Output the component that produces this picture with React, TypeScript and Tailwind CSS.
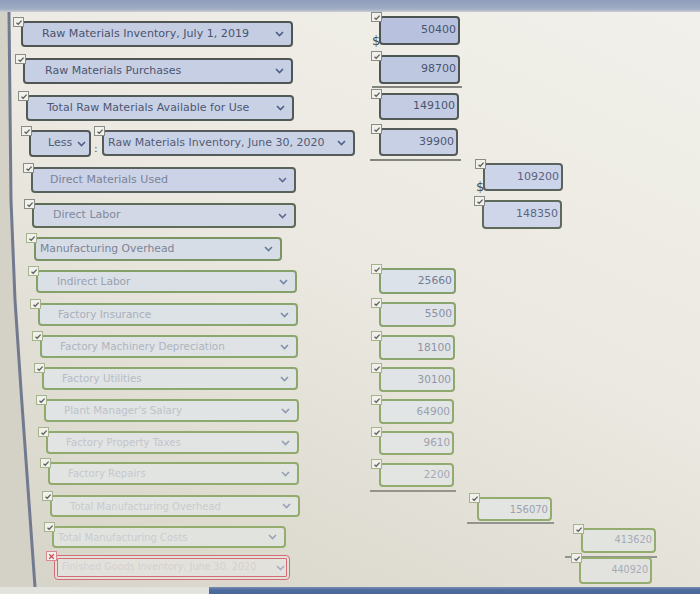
import React from "react";

type Value = {
  text: string;
  col: 1 | 2 | 3;
  wrap: string;
  box: string;
  tick: string;
  dollar?: boolean;
  rule?: string;
};

type Row = {
  label: string;
  row: string;
  sel: string;
  pad: string;
  box: string;
  chev: string;
  tick: string;
  value?: Value;
  less?: boolean;
  bad?: boolean;
};

const DARK_TICK = "border-[#8a8c88]";
const GREEN_TICK = "border-[#a3b48e]";

const ROWS: Row[] = [
  {
    label: "Raw Materials Inventory, July 1, 2019",
    row: "h-[37px]",
    sel: "ml-[21px] w-[272px] h-[26px]",
    pad: "pl-[19px] text-[11.1px]",
    box: "bg-[#c5cde3] border-[#4e5553] text-[#4a536e]",
    chev: "mr-[7px] text-[#4d5c82]",
    tick: DARK_TICK,
    value: {
      text: "50400",
      col: 1,
      wrap: "ml-[14px] mt-[-5px]",
      box: "w-[81px] h-[29px] bg-[#b8c2de] border-[#4c5452] text-[#4a536e] text-[11px]",
      tick: DARK_TICK,
      dollar: true,
    },
  },
  {
    label: "Raw Materials Purchases",
    row: "h-[37px]",
    sel: "ml-[23px] w-[270px] h-[26px]",
    pad: "pl-[20px] text-[11px]",
    box: "bg-[#c7cfe4] border-[#4f5654] text-[#4c5570]",
    chev: "mr-[7px] text-[#4d5c82]",
    tick: DARK_TICK,
    value: {
      text: "98700",
      col: 1,
      wrap: "ml-[14px] mt-[-3px]",
      box: "w-[81px] h-[29px] bg-[#bfc8e1] border-[#4e5654] text-[#4a536e] text-[11px]",
      tick: DARK_TICK,
      rule: "ml-[-7px] mt-[2px] w-[90px] bg-[#85857f]",
    },
  },
  {
    label: "Total Raw Materials Available for Use",
    row: "h-[35px]",
    sel: "ml-[26px] w-[268px] h-[26px]",
    pad: "pl-[19px] text-[11px]",
    box: "bg-[#c9d1e5] border-[#525957] text-[#4e5772]",
    chev: "mr-[7px] text-[#4f5e84]",
    tick: DARK_TICK,
    value: {
      text: "149100",
      col: 1,
      wrap: "ml-[14px] mt-[-2px]",
      box: "w-[80px] h-[27px] bg-[#c4cce3] border-[#525a57] text-[#4c5570] text-[11px]",
      tick: DARK_TICK,
    },
  },
  {
    label: "Raw Materials Inventory, June 30, 2020",
    row: "h-[37px]",
    sel: "w-[253px] h-[26px]",
    pad: "pl-[4px] text-[11px]",
    box: "bg-[#cad2e6] border-[#545b58] text-[#525b75]",
    chev: "mr-[7px] text-[#52618a]",
    tick: DARK_TICK,
    less: true,
    value: {
      text: "39900",
      col: 1,
      wrap: "ml-[14px] mt-[-2px]",
      box: "w-[79px] h-[28px] bg-[#c8d0e5] border-[#545b58] text-[#4e5772] text-[11px]",
      tick: DARK_TICK,
      rule: "ml-[-9px] mt-[3px] w-[91px] bg-[#85857f]",
    },
  },
  {
    label: "Direct Materials Used",
    row: "h-[36px]",
    sel: "ml-[31px] w-[265px] h-[26px]",
    pad: "pl-[17px] text-[11px]",
    box: "bg-[#ccd3e6] border-[#5a615d] text-[#7a8296]",
    chev: "mr-[7px] text-[#5b6a90]",
    tick: DARK_TICK,
    value: {
      text: "109200",
      col: 2,
      wrap: "ml-[13px] mt-[-4px]",
      box: "w-[80px] h-[28px] bg-[#ccd4e9] border-[#5a625c] text-[#5a6380] text-[11px]",
      tick: DARK_TICK,
      dollar: true,
    },
  },
  {
    label: "Direct Labor",
    row: "h-[34px]",
    sel: "ml-[32px] w-[264px] h-[25px]",
    pad: "pl-[19px] text-[11px]",
    box: "bg-[#d2d8e5] border-[#5e6b57] text-[#8189a0]",
    chev: "mr-[7px] text-[#5e6d92]",
    tick: DARK_TICK,
    value: {
      text: "148350",
      col: 2,
      wrap: "ml-[12px] mt-[-3px]",
      box: "w-[80px] h-[29px] bg-[#cfd6e9] border-[#5f6a5b] text-[#5d6682] text-[11px]",
      tick: DARK_TICK,
    },
  },
  {
    label: "Manufacturing Overhead",
    row: "h-[33px]",
    sel: "ml-[34px] w-[248px] h-[24px]",
    pad: "pl-[4px] text-[10.8px]",
    box: "bg-[#d7dde6] border-[#7b9466] text-[#7b8396]",
    chev: "mr-[7px] text-[#6a789a]",
    tick: GREEN_TICK,
  },
  {
    label: "Indirect Labor",
    row: "h-[33px]",
    sel: "ml-[36px] w-[261px] h-[23px]",
    pad: "pl-[19px] text-[10.6px]",
    box: "bg-[#dbe0e7] border-[#86a06a] text-[#98a0b0]",
    chev: "mr-[7px] text-[#7583a4]",
    tick: GREEN_TICK,
    value: {
      text: "25660",
      col: 1,
      wrap: "ml-[14px] mt-[-2px]",
      box: "w-[77px] h-[26px] bg-[#dce2ea] border-[#84a06c] text-[#737c93] text-[10.8px]",
      tick: GREEN_TICK,
    },
  },
  {
    label: "Factory Insurance",
    row: "h-[32px]",
    sel: "ml-[38px] w-[260px] h-[23px]",
    pad: "pl-[18px] text-[10.5px]",
    box: "bg-[#dde2e6] border-[#8aa56c] text-[#a9afbb]",
    chev: "mr-[7px] text-[#7f8ba8]",
    tick: GREEN_TICK,
    value: {
      text: "5500",
      col: 1,
      wrap: "ml-[14px] mt-[-1px]",
      box: "w-[77px] h-[25px] bg-[#dfe3e8] border-[#8aa56e] text-[#8a90a2] text-[10.7px]",
      tick: GREEN_TICK,
    },
  },
  {
    label: "Factory Machinery Depreciation",
    row: "h-[32px]",
    sel: "ml-[40px] w-[258px] h-[23px]",
    pad: "pl-[18px] text-[10.4px]",
    box: "bg-[#dfe3e6] border-[#8ca76c] text-[#aeb4bf]",
    chev: "mr-[7px] text-[#8591ab]",
    tick: GREEN_TICK,
    value: {
      text: "18100",
      col: 1,
      wrap: "ml-[14px]",
      box: "w-[76px] h-[25px] bg-[#e0e4e7] border-[#8ca76e] text-[#8e94a5] text-[10.6px]",
      tick: GREEN_TICK,
    },
  },
  {
    label: "Factory Utilities",
    row: "h-[32px]",
    sel: "ml-[42px] w-[256px] h-[23px]",
    pad: "pl-[18px] text-[10.3px]",
    box: "bg-[#e0e4e5] border-[#8ea86c] text-[#b7bbc4]",
    chev: "mr-[7px] text-[#8a95ae]",
    tick: GREEN_TICK,
    value: {
      text: "30100",
      col: 1,
      wrap: "ml-[14px]",
      box: "w-[76px] h-[25px] bg-[#e1e4e6] border-[#8ea86e] text-[#9197a7] text-[10.5px]",
      tick: GREEN_TICK,
    },
  },
  {
    label: "Plant Manager's Salary",
    row: "h-[32px]",
    sel: "ml-[44px] w-[255px] h-[23px]",
    pad: "pl-[18px] text-[10.3px]",
    box: "bg-[#e1e4e4] border-[#90a96c] text-[#bec2c9]",
    chev: "mr-[7px] text-[#8f99b1]",
    tick: GREEN_TICK,
    value: {
      text: "64900",
      col: 1,
      wrap: "ml-[14px]",
      box: "w-[75px] h-[25px] bg-[#e2e5e5] border-[#90a96e] text-[#9aa0ae] text-[10.5px]",
      tick: GREEN_TICK,
    },
  },
  {
    label: "Factory Property Taxes",
    row: "h-[31px]",
    sel: "ml-[46px] w-[253px] h-[23px]",
    pad: "pl-[18px] text-[10.2px]",
    box: "bg-[#e2e4e3] border-[#91aa6c] text-[#c2c5cb]",
    chev: "mr-[7px] text-[#939db3]",
    tick: GREEN_TICK,
    value: {
      text: "9610",
      col: 1,
      wrap: "ml-[14px]",
      box: "w-[75px] h-[24px] bg-[#e3e5e4] border-[#91aa6e] text-[#9da2b0] text-[10.4px]",
      tick: GREEN_TICK,
    },
  },
  {
    label: "Factory Repairs",
    row: "h-[33px]",
    sel: "ml-[48px] w-[251px] h-[23px]",
    pad: "pl-[18px] text-[10.1px]",
    box: "bg-[#e2e4e2] border-[#92ab6c] text-[#c6c8cd]",
    chev: "mr-[7px] text-[#969fb5]",
    tick: GREEN_TICK,
    value: {
      text: "2200",
      col: 1,
      wrap: "ml-[14px] mt-[1px]",
      box: "w-[75px] h-[24px] bg-[#e3e5e3] border-[#92ab6e] text-[#a4a9b5] text-[10.3px]",
      tick: GREEN_TICK,
      rule: "ml-[-9px] mt-[3px] w-[86px] bg-[#94948e]",
    },
  },
  {
    label: "Total Manufacturing Overhead",
    row: "h-[31px]",
    sel: "ml-[50px] w-[250px] h-[22px]",
    pad: "pl-[18px] text-[10px]",
    box: "bg-[#e2e4e1] border-[#93ac6c] text-[#c9cbcf]",
    chev: "mr-[7px] text-[#98a1b6]",
    tick: GREEN_TICK,
    value: {
      text: "156070",
      col: 2,
      wrap: "ml-[7px] mt-[2px]",
      box: "w-[75px] h-[24px] bg-[#e3e5e2] border-[#93ac6e] text-[#9ca1af] text-[10px]",
      tick: GREEN_TICK,
      rule: "ml-[-10px] mt-[1px] w-[87px] bg-[#94948e]",
    },
  },
  {
    label: "Total Manufacturing Costs",
    row: "h-[29px]",
    sel: "ml-[52px] w-[234px] h-[22px]",
    pad: "pl-[4px] text-[10px]",
    box: "bg-[#e1e3df] border-[#94ad6c] text-[#cacbcf]",
    chev: "mr-[7px] text-[#9aa3b7]",
    tick: GREEN_TICK,
    value: {
      text: "413620",
      col: 3,
      wrap: "ml-[11px] mt-[2px]",
      box: "w-[75px] h-[25px] bg-[#e2e4e0] border-[#94ad6e] text-[#a6abb6] text-[9.8px]",
      tick: GREEN_TICK,
      rule: "ml-[-16px] mt-[3px] w-[92px] bg-[#94948e]",
    },
  },
  {
    label: "Finished Goods Inventory, June 30, 2020",
    row: "h-[32px]",
    sel: "ml-[54px] w-[236px] h-[25px]",
    pad: "pl-[4px] text-[9.6px]",
    box: "bg-[#e3e1dc] border-[#d66a74] text-[#d3d0d0]",
    chev: "mr-[1px] text-[#a8aec0]",
    tick: "border-[#d98a90]",
    bad: true,
    value: {
      text: "440920",
      col: 3,
      wrap: "ml-[9px] mt-[2px]",
      box: "w-[73px] h-[27px] bg-[#e2e3df] border-[#95ad6e] text-[#a6abb6] text-[9.6px]",
      tick: GREEN_TICK,
    },
  },
];

const Tick = ({ tone, bad }: { tone: string; bad?: boolean }) => (
  <span
    className={`absolute -left-[8px] -top-[4px] z-10 flex h-[10px] w-[11px] items-center justify-center border bg-[#f1f0ea] ${tone}`}
  >
    {bad ? (
      <svg width="7" height="7" viewBox="0 0 7 7">
        <path d="M1.2 1.2L5.8 5.8M5.8 1.2L1.2 5.8" stroke="#d24b58" strokeWidth="1.3" />
      </svg>
    ) : (
      <svg width="8" height="7" viewBox="0 0 8 7">
        <path d="M1.5 3.8L3.2 5.3L6.6 1.6" fill="none" stroke="#5e615d" strokeWidth="1.3" />
      </svg>
    )}
  </span>
);

const Chevron = () => (
  <svg width="9" height="6" viewBox="0 0 9 6">
    <path d="M1 1L4.5 4.5L8 1" fill="none" stroke="currentColor" strokeWidth="1.6" />
  </svg>
);

const Select = ({
  cls,
  box,
  pad,
  chev,
  tick,
  label,
  bad,
}: {
  cls: string;
  box: string;
  pad: string;
  chev: string;
  tick: string;
  label: string;
  bad?: boolean;
}) => (
  <div className={`relative shrink-0 ${cls}`}>
    <Tick tone={tick} bad={bad} />
    <div
      className={`flex h-full w-full items-center justify-between rounded-[4px] ${bad ? "border-[4px] border-double" : "border-2"} ${box}`}
    >
      <span className={`whitespace-nowrap ${pad}`}>{label}</span>
      <span className={`shrink-0 ${chev}`}>
        <Chevron />
      </span>
    </div>
  </div>
);

const Amount = ({ v }: { v: Value }) => {
  const parts = v.box.split(" ");
  return (
    <div className={`flex flex-col items-start ${v.wrap}`}>
      <div className={`relative ${parts.slice(0, 2).join(" ")}`}>
        <Tick tone={v.tick} />
        {v.dollar && (
          <span className="absolute -left-[7px] bottom-[-2px] text-[13px] leading-none text-[#4c4c4a]">$</span>
        )}
        <div
          className={`flex h-full w-full items-center justify-end rounded-[4px] border-2 pr-[2px] ${parts.slice(2).join(" ")}`}
        >
          {v.text}
        </div>
      </div>
      {v.rule && <div className={`h-[2px] shrink-0 ${v.rule}`} />}
    </div>
  );
};

const LessPair = ({ r }: { r: Row }) => (
  <div className="flex items-start">
    <Select
      cls="ml-[29px] w-[62px] h-[27px]"
      box="bg-[#c9d1e5] border-[#525957] text-[#525b75] !justify-start"
      pad="pl-[17px] pr-[5px] text-[11px]"
      chev="mr-[7px] text-[#52618a]"
      tick={DARK_TICK}
      label="Less"
    />
    <span className="mt-[13px] ml-[3px] w-[8px] text-[11px] leading-none text-[#555]">:</span>
    <Select cls={r.sel} box={r.box} pad={r.pad} chev={r.chev} tick={r.tick} label={r.label} />
  </div>
);

export default function App() {
  return (
    <div className="flex h-[594px] w-[700px] flex-col overflow-hidden bg-[#e7e5dc] font-['DejaVu_Sans',Verdana,sans-serif] text-[11px]">
      {/* window chrome above the form */}
      <div className="h-[12px] shrink-0 bg-[linear-gradient(180deg,#8e9dba_0%,#a1adc4_75%,#c9cdd4_100%)]" />

      <div className="relative flex-1 overflow-hidden bg-[linear-gradient(205deg,#f1f0ea_0%,#ebe9e1_45%,#dedbd1_80%,#d6d3c8_100%)]">
        {/* page edge on the left */}
        <svg className="pointer-events-none absolute inset-0" width="700" height="575">
          <polygon points="0,0 9,0 11,188 15,288 21,378 35,575 0,575" fill="#d4d1c6" />
          <polyline
            points="9,0 11,188 15,288 21,378 35,575"
            fill="none"
            stroke="#727a90"
            strokeWidth="3"
          />
        </svg>

        <div className="relative flex flex-col pt-[9px]">
          {ROWS.map((r) => (
            <div key={r.label} className={`flex shrink-0 items-start ${r.row}`}>
              <div className="w-[365px] shrink-0">
                {r.less ? (
                  <LessPair r={r} />
                ) : (
                  <Select
                    cls={r.sel}
                    box={r.box}
                    pad={r.pad}
                    chev={r.chev}
                    tick={r.tick}
                    label={r.label}
                    bad={r.bad}
                  />
                )}
              </div>
              <div className="w-[105px] shrink-0">{r.value?.col === 1 && <Amount v={r.value} />}</div>
              <div className="w-[100px] shrink-0">{r.value?.col === 2 && <Amount v={r.value} />}</div>
              <div className="flex-1">{r.value?.col === 3 && <Amount v={r.value} />}</div>
            </div>
          ))}
        </div>
      </div>

      {/* taskbar strip */}
      <div className="flex h-[7px] shrink-0">
        <div className="w-[209px] bg-[#e2e2de]" />
        <div className="flex-1 bg-[linear-gradient(180deg,#7a8fb2_0%,#4e6c9e_40%,#4a679a_100%)]" />
      </div>
    </div>
  );
}
